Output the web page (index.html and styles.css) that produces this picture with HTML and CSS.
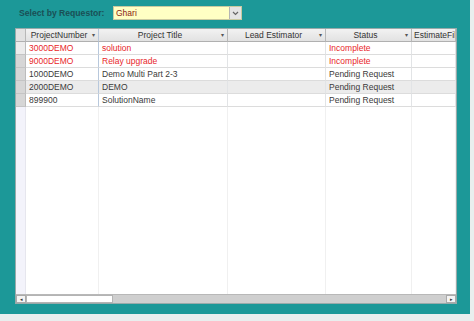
FILE: index.html
```html
<!DOCTYPE html>
<html lang="en">
<head>
    <meta charset="UTF-8">
    <title>Select by Requestor</title>
    <link rel="stylesheet" href="styles.css">
</head>
<body>
    <div class="panel">
        <div class="toolbar">
            <label class="toolbar-label">Select by Requestor:</label>
            <div class="combo">
                <span class="combo-text">Ghari</span>
                <span class="combo-btn">
                    <svg width="7" height="5" viewBox="0 0 7 5"><path d="M1 1 L3.5 3.5 L6 1" fill="none" stroke="#666" stroke-width="1.2"/></svg>
                </span>
            </div>
        </div>

        <div class="grid">
            <div class="grid-row head">
                <div class="cell sel"></div>
                <div class="cell">ProjectNumber<span class="arrow">▾</span></div>
                <div class="cell">Project Title<span class="arrow">▾</span></div>
                <div class="cell">Lead Estimator<span class="arrow">▾</span></div>
                <div class="cell">Status<span class="arrow">▾</span></div>
                <div class="cell left">EstimateFil</div>
            </div>

            <div class="grid-row red">
                <div class="cell sel first"></div>
                <div class="cell">3000DEMO</div>
                <div class="cell">solution</div>
                <div class="cell"></div>
                <div class="cell">Incomplete</div>
                <div class="cell"></div>
            </div>
            <div class="grid-row red">
                <div class="cell sel"></div>
                <div class="cell">9000DEMO</div>
                <div class="cell">Relay upgrade</div>
                <div class="cell"></div>
                <div class="cell">Incomplete</div>
                <div class="cell"></div>
            </div>
            <div class="grid-row">
                <div class="cell sel"></div>
                <div class="cell">1000DEMO</div>
                <div class="cell">Demo Multi Part 2-3</div>
                <div class="cell"></div>
                <div class="cell">Pending Request</div>
                <div class="cell"></div>
            </div>
            <div class="grid-row alt">
                <div class="cell sel"></div>
                <div class="cell">2000DEMO</div>
                <div class="cell">DEMO</div>
                <div class="cell"></div>
                <div class="cell">Pending Request</div>
                <div class="cell"></div>
            </div>
            <div class="grid-row">
                <div class="cell sel"></div>
                <div class="cell">899900</div>
                <div class="cell">SolutionName</div>
                <div class="cell"></div>
                <div class="cell">Pending Request</div>
                <div class="cell"></div>
            </div>

            <div class="grid-row filler">
                <div class="cell sel"></div>
                <div class="cell"></div>
                <div class="cell"></div>
                <div class="cell"></div>
                <div class="cell"></div>
                <div class="cell"></div>
            </div>

            <div class="hscroll">
                <span class="sb-btn">◂</span>
                <span class="sb-thumb"></span>
                <span class="sb-track"></span>
                <span class="sb-btn">▸</span>
            </div>
        </div>
    </div>
</body>
</html>
```

FILE: styles.css
```css
* {
    margin: 0;
    padding: 0;
    box-sizing: border-box;
}

body {
    background: #e9eeee;
    width: 474px;
    height: 321px;
    overflow: hidden;
    font-family: 'Liberation Sans', Arial, sans-serif;
}

.panel {
    width: 470px;
    height: 314px;
    background: #1c9898;
    padding: 6px 13px 10px 15px;
    display: flex;
    flex-direction: column;
}

.toolbar {
    display: flex;
    align-items: center;
    height: 14px;
    margin-bottom: 8px;
}

.toolbar-label {
    width: 98px;
    padding-left: 4px;
    font-size: 8.6px;
    font-weight: bold;
    color: #1a4f55;
    white-space: nowrap;
}

.combo {
    display: flex;
    width: 129px;
    height: 14px;
    background: #ffffc4;
    border: 1px solid #c9c9a0;
}

.combo-text {
    flex: 1;
    font-size: 8.5px;
    line-height: 12px;
    padding-left: 2px;
    color: #8a1a10;
}

.combo-btn {
    width: 12px;
    background: #e4e4e4;
    border-left: 1px solid #b4b4b4;
    display: flex;
    align-items: center;
    justify-content: center;
}

.grid {
    flex: 1;
    background: #fff;
    border: 1px solid #9aa;
    display: flex;
    flex-direction: column;
    overflow: hidden;
}

.grid-row {
    display: grid;
    grid-template-columns: 10px 73px 129px 98px 86px 44px;
    height: 13px;
    font-size: 8.5px;
    line-height: 12px;
    color: #3a3a3a;
}

.cell {
    border-right: 1px solid #e2e4e6;
    border-bottom: 1px solid #dcdcdc;
    padding-left: 3px;
    white-space: nowrap;
    overflow: hidden;
}

.grid-row .cell:nth-child(2) {
    border-right-color: #b8c8dc;
}

.cell.sel {
    background: #d6d6d6;
    border-right: 1px solid #bcbcbc;
    border-bottom: 1px solid #c4c4c4;
    padding: 0;
}

.cell.sel.first {
    background: #ececec;
}

.head {
    height: 13px;
    background: #e8e8e8;
    color: #333;
}

.head .cell {
    position: relative;
    text-align: center;
    padding: 0 6px 0 0;
    background: linear-gradient(#f2f2f2, #e2e2e2);
    border-right: 1px solid #b8b8b8;
    border-bottom: 1px solid #b0b0b0;
}

.head .cell.left {
    text-align: left;
    padding-left: 2px;
}

.head .cell.sel {
    background: #e2e2e2;
}

.arrow {
    position: absolute;
    right: 3px;
    top: 0;
    font-size: 6px;
    color: #555;
}

.red {
    color: #e8262a;
}

.alt {
    background: #ececec;
}

.filler {
    flex: 1;
    height: auto;
}

.filler .cell {
    border-bottom: none;
    border-right-color: #f0f0f0;
}

.filler .cell:nth-child(2) {
    border-right-color: #f0f0f0;
}

.filler .cell.sel {
    background: #f3f3fb;
    border-right-color: #e6e6ee;
}

.hscroll {
    display: flex;
    height: 9px;
    background: #cfcfcf;
    border-top: 1px solid #b8b8b8;
}

.sb-btn {
    width: 10px;
    background: #f4f4f4;
    border: 1px solid #aaa;
    font-size: 5px;
    line-height: 7px;
    text-align: center;
    color: #333;
}

.sb-thumb {
    width: 87px;
    background: #fff;
    border: 1px solid #b4b4b4;
}

.sb-track {
    flex: 1;
}
```
